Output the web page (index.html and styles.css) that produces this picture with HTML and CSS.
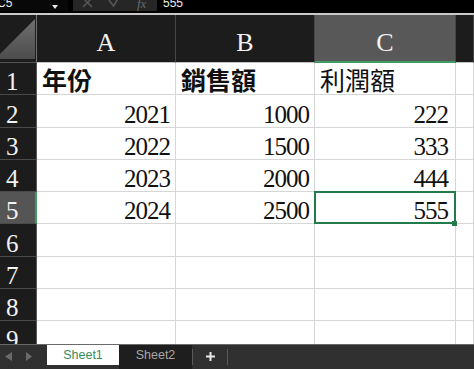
FILE: index.html
```html
<!DOCTYPE html>
<html lang="zh-Hant">
<head>
<meta charset="utf-8">
<title>Sheet</title>
<link rel="stylesheet" href="styles.css">
</head>
<body>
<div class="app">
  <div class="topbar">
    <div class="namebox">
      <span class="nb-text">C5</span>
      <svg class="dd" width="6" height="4" viewBox="0 0 6 4"><polygon points="0,0 6,0 3,4" fill="#e8e8e8"/></svg>
    </div>
    <div class="fbtns">
      <svg width="84" height="11" viewBox="0 0 84 11">
        <path d="M10 -2 L19 7 M19 -2 L10 7" stroke="#555" stroke-width="1.6" fill="none"/>
        <path d="M36 0 L40.5 6 L46 -3" stroke="#555" stroke-width="1.6" fill="none"/>
        <text x="64" y="8" class="fx">fx</text>
      </svg>
    </div>
    <div class="finput"><span class="fi-text">555</span></div>
  </div>
  <div class="rule"></div>
  <div class="sheet">
    <div class="c corner"><svg width="36" height="47" viewBox="0 0 36 47"><defs><linearGradient id="g" x1="0" y1="0" x2="0" y2="1"><stop offset="0" stop-color="#707070"/><stop offset="1" stop-color="#4c4c4c"/></linearGradient></defs><polygon points="35,4 35,44 0,44 0,39" fill="url(#g)"/></svg></div>
    <div class="c ch">A</div>
    <div class="c ch">B</div>
    <div class="c ch sel">C</div>
    <div class="c ch"></div>

    <div class="c rh">1</div>
    <div class="c txt b">年份</div>
    <div class="c txt b">銷售額</div>
    <div class="c txt">利潤額</div>
    <div class="c"></div>

    <div class="c rh">2</div>
    <div class="c num">2021</div>
    <div class="c num">1000</div>
    <div class="c num numc">222</div>
    <div class="c"></div>

    <div class="c rh">3</div>
    <div class="c num">2022</div>
    <div class="c num">1500</div>
    <div class="c num numc">333</div>
    <div class="c"></div>

    <div class="c rh">4</div>
    <div class="c num">2023</div>
    <div class="c num">2000</div>
    <div class="c num numc">444</div>
    <div class="c"></div>

    <div class="c rh sel">5</div>
    <div class="c num">2024</div>
    <div class="c num">2500</div>
    <div class="c num numc active">555<span class="selbox"><span class="handle"></span></span></div>
    <div class="c"></div>

    <div class="c rh">6</div>
    <div class="c"></div>
    <div class="c"></div>
    <div class="c"></div>
    <div class="c"></div>

    <div class="c rh">7</div>
    <div class="c"></div>
    <div class="c"></div>
    <div class="c"></div>
    <div class="c"></div>

    <div class="c rh">8</div>
    <div class="c"></div>
    <div class="c"></div>
    <div class="c"></div>
    <div class="c"></div>

    <div class="c rh">9</div>
    <div class="c"></div>
    <div class="c"></div>
    <div class="c"></div>
    <div class="c"></div>
  </div>
  <div class="tabs">
    <div class="arrows">
      <svg width="47" height="24" viewBox="0 0 47 24"><polygon points="12,7 12,16 5,11.5" fill="#6a6a6a"/><polygon points="26,7 26,16 32,11.5" fill="#6a6a6a"/></svg>
    </div>
    <div class="tab tab1">Sheet1</div>
    <div class="tab tab2">Sheet2</div>
    <div class="vdiv"></div>
    <div class="plus"><svg width="9" height="9" viewBox="0 0 9 9"><path d="M4.5 0 V9 M0 4.5 H9" stroke="#e8e8e8" stroke-width="2"/></svg></div>
    <div class="vdiv"></div>
  </div>
</div>
</body>
</html>
```
FILE: styles.css
```css
html, body {
  margin: 0;
  padding: 0;
  background: #1c1c1c;
}
body {
  width: 474px;
  height: 369px;
  overflow: hidden;
}
.app {
  width: 474px;
  height: 369px;
  display: flex;
  flex-direction: column;
}

/* formula bar */
.topbar {
  display: flex;
  height: 11px;
  overflow: hidden;
  background: #000;
  flex: none;
}
.namebox {
  width: 73px;
  box-sizing: border-box;
  background: #080808;
  display: flex;
  justify-content: space-between;
  padding-right: 10px;
  border-right: 5px solid #000;
}
.nb-text {
  align-self: flex-end;
  font: 12px/13px "Liberation Sans", Arial, sans-serif;
  color: #eeeeee;
  margin-left: -3px;
  padding-bottom: 1px;
}
.dd {
  display: block;
  margin-top: 5px;
}
.fbtns {
  width: 84px;
  background: #262626;
}
.fbtns svg {
  display: block;
}
.fx {
  font: italic 13px "Liberation Serif", serif;
  fill: #6a6a6a;
}
.finput {
  flex: 1;
  background: #000;
  display: flex;
  align-items: flex-end;
  padding-left: 6px;
}
.fi-text {
  font: 12px/13px "Liberation Sans", Arial, sans-serif;
  color: #eeeeee;
  padding-bottom: 1px;
}
.rule {
  height: 2px;
  border-top: 2px solid #000;
  background: #c9c9c9;
  flex: none;
}

/* grid */
.sheet {
  display: grid;
  grid-template-columns: 37px 139px 139px 141px 1fr;
  grid-template-rows: 48px 32px 33px 32px 32px 32px 33px 32px 32px 32px;
  height: 329px;
  overflow: hidden;
  flex: none;
}
.c {
  box-sizing: border-box;
  border-right: 1px solid #d6d6d6;
  border-bottom: 1px solid #d6d6d6;
  background: #fff;
  display: flex;
  align-items: flex-end;
  min-width: 0;
  color: #111;
}
.num {
  justify-content: flex-end;
  font: 25px/24px "Liberation Serif", "Times New Roman", serif;
  letter-spacing: -1px;
  padding-right: 5px;
}
.numc {
  padding-right: 7px;
}
.txt {
  font: 25px/25px "Noto Sans CJK TC", sans-serif;
  padding: 0 0 2px 5px;
  white-space: nowrap;
}
.b {
  font-weight: 700;
}
.corner {
  background: #1c1c1c;
  border-right-color: #707070;
  border-bottom-color: #555;
}
.corner svg {
  display: block;
}
.ch {
  background: #1c1c1c;
  color: #f2f2f2;
  border-right-color: #474747;
  border-bottom-color: #c4c4c4;
  justify-content: center;
  font: 26px/26px "Liberation Serif", "Times New Roman", serif;
  padding-bottom: 6px;
}
.ch.sel {
  background: #585858;
  border-bottom: 2px solid #3f9a66;
  padding-bottom: 5px;
}
.rh {
  background: #1c1c1c;
  color: #f2f2f2;
  border-right-color: #5a5a5a;
  border-bottom-color: #4a4a4a;
  font: 25px/24px "Liberation Serif", "Times New Roman", serif;
  padding-left: 6px;
}
.rh.sel {
  background: #555;
  border-right: 2px solid #3f9a66;
}
.active {
  position: relative;
}
.selbox {
  position: absolute;
  left: -1px;
  right: -1px;
  top: -1px;
  bottom: -1px;
  border: 2px solid #237a4b;
  z-index: 2;
}
.handle {
  position: absolute;
  width: 5px;
  height: 5px;
  right: -3px;
  bottom: -4px;
  background: #237a4b;
}

/* sheet tabs */
.tabs {
  flex: none;
  height: 25px;
  box-sizing: border-box;
  border-top: 1px solid #6a6a6a;
  background: #303030;
  display: flex;
  align-items: flex-start;
}
.arrows {
  width: 47px;
}
.arrows svg {
  display: block;
}
.tab {
  box-sizing: border-box;
  font: 12.5px/17px "Liberation Sans", Arial, sans-serif;
  padding-top: 2px;
  text-align: center;
}
.tab1 {
  width: 72px;
  height: 20px;
  background: #fff;
  color: #3a8a5c;
}
.tab2 {
  width: 73px;
  height: 24px;
  background: #1e1e1e;
  color: #a6a6a6;
}
.vdiv {
  width: 1px;
  height: 16px;
  margin-top: 4px;
  background: #5a5a5a;
}
.plus {
  width: 34px;
  display: flex;
  justify-content: center;
  padding-top: 7px;
}
.plus svg {
  display: block;
}
```
